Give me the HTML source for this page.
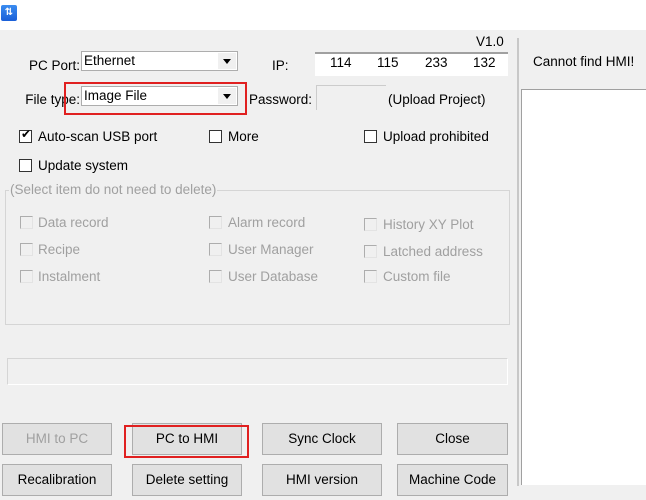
<!DOCTYPE html>
<html><head><meta charset="utf-8"><style>
*{margin:0;padding:0;box-sizing:border-box}
body{width:646px;height:500px;background:#f0f0f0;position:relative;overflow:hidden;font-family:"Liberation Sans","DejaVu Sans",sans-serif;font-size:13.5px;color:#000}
.a{position:absolute;white-space:nowrap}
.title{left:0;top:0;width:646px;height:30px;background:#fff}
.cb{position:absolute;width:13px;height:13px;border:1px solid #333;background:#fff}
.dcb{position:absolute;width:13px;height:13px;border:1px solid #adadad;background:#f0f0f0;border-right-color:#e3e3e3;border-bottom-color:#e3e3e3}
.dis{color:#a0a0a0}
.combo{position:absolute;background:#fff;border:1px solid #adadad;height:20px}
.combo .t{position:absolute;left:2px;top:1px}
.combo .arr{position:absolute;right:1px;top:1px;width:18px;height:16px;background:#f0f0f0}
.combo .arr:after{content:"";position:absolute;left:5px;top:6px;border-left:4px solid transparent;border-right:4px solid transparent;border-top:5px solid #000}
.btn{position:absolute;height:32px;background:#e1e1e1;border:1px solid #adadad;text-align:center;line-height:30px}
.red{position:absolute;border:2px solid #e02020}
</style></head><body>
<div class="a title"></div>
<div class="a" style="left:1px;top:5px;width:16px;height:16px;background:linear-gradient(#3a8cf0,#1a5fd8);border-radius:2px;color:#fff;font-size:10px;line-height:16px;text-align:center;font-weight:bold">⇅</div>

<div class="a" style="left:476px;top:34px">V1.0</div>
<div class="a" style="left:0;width:80px;text-align:right;top:58px">PC Port:</div>
<div class="combo" style="left:81px;top:51px;width:157px"><span class="t">Ethernet</span><span class="arr"></span></div>
<div class="a" style="left:272px;top:58px">IP:</div>
<div class="a" style="left:315px;top:52px;width:193px;height:24px;background:#fff;border-top:2px solid #a0a0a0"></div>
<div class="a" style="left:330px;top:55px">114</div>
<div class="a" style="left:377px;top:55px">115</div>
<div class="a" style="left:425px;top:55px">233</div>
<div class="a" style="left:473px;top:55px">132</div>

<div class="a" style="left:0;width:80px;text-align:right;top:92px">File type:</div>
<div class="combo" style="left:81px;top:86px;width:157px"><span class="t">Image File</span><span class="arr"></span></div>
<div class="red" style="left:64px;top:82px;width:183px;height:33px"></div>
<div class="a" style="left:249px;top:92px">Password:</div>
<div class="a" style="left:316px;top:85px;width:70px;height:25px;border:1px solid #ccc;border-right:none;border-bottom:none"></div>
<div class="a" style="left:388px;top:92px">(Upload Project)</div>

<div class="cb" style="left:19px;top:130px"><span style="position:absolute;left:1px;top:-4px;font-size:12px">✔</span></div>
<div class="a" style="left:38px;top:129px">Auto-scan USB port</div>
<div class="cb" style="left:209px;top:130px"></div>
<div class="a" style="left:228px;top:129px">More</div>
<div class="cb" style="left:364px;top:130px"></div>
<div class="a" style="left:383px;top:129px">Upload prohibited</div>
<div class="cb" style="left:19px;top:159px"></div>
<div class="a" style="left:38px;top:158px">Update system</div>

<div class="a" style="left:5px;top:190px;width:505px;height:135px;border:1px solid #d5d5d5"></div>
<div class="a dis" style="left:9px;top:182px;background:#f0f0f0;padding:0 1px">(Select item do not need to delete)</div>

<div class="dcb" style="left:20px;top:216px"></div><div class="a dis" style="left:38px;top:215px">Data record</div>
<div class="dcb" style="left:20px;top:243px"></div><div class="a dis" style="left:38px;top:242px">Recipe</div>
<div class="dcb" style="left:20px;top:270px"></div><div class="a dis" style="left:38px;top:269px">Instalment</div>
<div class="dcb" style="left:209px;top:216px"></div><div class="a dis" style="left:228px;top:215px">Alarm record</div>
<div class="dcb" style="left:209px;top:243px"></div><div class="a dis" style="left:228px;top:242px">User Manager</div>
<div class="dcb" style="left:209px;top:270px"></div><div class="a dis" style="left:228px;top:269px">User Database</div>
<div class="dcb" style="left:364px;top:218px"></div><div class="a dis" style="left:383px;top:217px">History XY Plot</div>
<div class="dcb" style="left:364px;top:245px"></div><div class="a dis" style="left:383px;top:244px">Latched address</div>
<div class="dcb" style="left:364px;top:270px"></div><div class="a dis" style="left:383px;top:269px">Custom file</div>

<div class="a" style="left:7px;top:358px;width:501px;height:27px;border:1px solid #d5d5d5;border-right-color:#fff;border-bottom-color:#fff"></div>

<div class="btn dis" style="left:2px;top:423px;width:110px">HMI to PC</div>
<div class="btn" style="left:132px;top:423px;width:110px">PC to HMI</div>
<div class="red" style="left:124px;top:425px;width:125px;height:33px"></div>
<div class="btn" style="left:262px;top:423px;width:120px">Sync Clock</div>
<div class="btn" style="left:397px;top:423px;width:111px">Close</div>
<div class="btn" style="left:2px;top:464px;width:110px">Recalibration</div>
<div class="btn" style="left:132px;top:464px;width:110px">Delete setting</div>
<div class="btn" style="left:262px;top:464px;width:120px">HMI version</div>
<div class="btn" style="left:397px;top:464px;width:111px">Machine Code</div>

<div class="a" style="left:517px;top:38px;width:2px;height:448px;background:#c8c8c8"></div>
<div class="a" style="left:533px;top:54px">Cannot find HMI!</div>
<div class="a" style="left:521px;top:89px;width:125px;height:396px;background:#fff;border-left:1px solid #a0a0a0;border-top:1px solid #a0a0a0"></div>
</body></html>
